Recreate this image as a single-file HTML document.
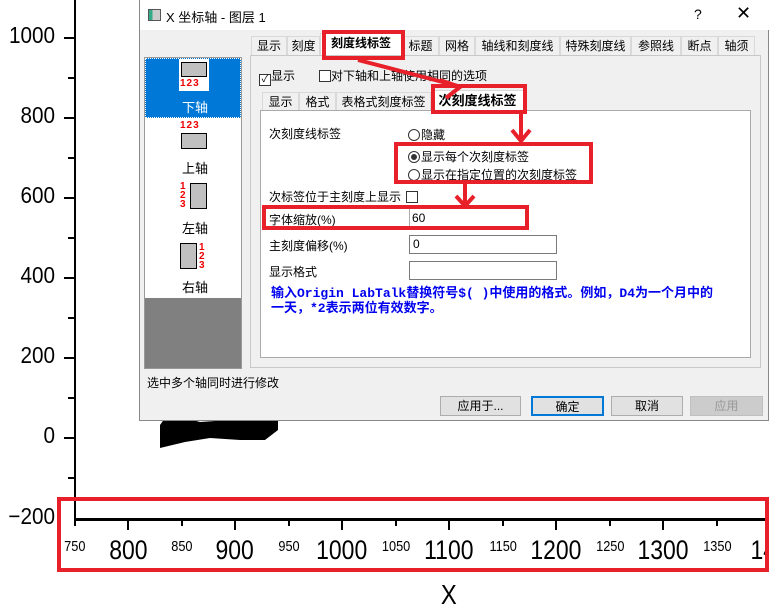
<!DOCTYPE html>
<html><head><meta charset="utf-8"><style>
*{margin:0;padding:0;box-sizing:border-box}
body{width:769px;height:610px;background:#fff;position:relative;overflow:hidden;font-family:"Liberation Sans","Noto Sans CJK SC",sans-serif;font-size:12px;color:#000}
.a{position:absolute}
.yl{font-size:23px;text-align:right;width:60px;left:-5px;transform:scaleX(0.9);transform-origin:right}
.red{border:4px solid #e8202a;position:absolute}
.tab{position:absolute;top:36px;height:20px;line-height:19px;border:1px solid #d9d9d9;border-bottom:none;background:#f0f0f0;text-align:center;font-size:12px}
.btn{position:absolute;top:396px;height:20px;border:1px solid #adadad;background:#e1e1e1;text-align:center;line-height:18px;font-size:12px}
.box{position:absolute;border:1px solid #7a7a7a;background:#fff;height:19px;padding-left:3px;line-height:17px}
.rad{display:inline-block;width:12px;height:12px;border:1px solid #333;border-radius:50%;vertical-align:-2px;margin-right:1px;background:#fff;position:relative}
.chk{display:inline-block;width:12px;height:12px;border:1px solid #333;vertical-align:-2px;background:#fff}
</style></head><body>
<div class="a" style="left:74px;top:0;width:2px;height:520px;background:#000"></div>
<div class="a" style="left:74px;top:518px;width:695px;height:3px;background:#000"></div>
<div class="a yl" style="top:22px">1000</div>
<div class="a yl" style="top:102px">800</div>
<div class="a yl" style="top:182px">600</div>
<div class="a yl" style="top:262px">400</div>
<div class="a yl" style="top:342px">200</div>
<div class="a yl" style="top:422px">0</div>
<div class="a yl" style="top:503px">−200</div>
<div class="a" style="left:64px;top:37px;width:10px;height:2px;background:#000"></div>
<div class="a" style="left:64px;top:117px;width:10px;height:2px;background:#000"></div>
<div class="a" style="left:64px;top:197px;width:10px;height:2px;background:#000"></div>
<div class="a" style="left:64px;top:277px;width:10px;height:2px;background:#000"></div>
<div class="a" style="left:64px;top:357px;width:10px;height:2px;background:#000"></div>
<div class="a" style="left:64px;top:437px;width:10px;height:2px;background:#000"></div>
<div class="a" style="left:68px;top:77px;width:6px;height:2px;background:#000"></div>
<div class="a" style="left:68px;top:157px;width:6px;height:2px;background:#000"></div>
<div class="a" style="left:68px;top:237px;width:6px;height:2px;background:#000"></div>
<div class="a" style="left:68px;top:317px;width:6px;height:2px;background:#000"></div>
<div class="a" style="left:68px;top:397px;width:6px;height:2px;background:#000"></div>
<div class="a" style="left:68px;top:477px;width:6px;height:2px;background:#000"></div>
<svg class="a" style="left:0;top:0" width="769" height="610">
<g stroke="#000" stroke-width="2">
<line x1="75" y1="520" x2="75" y2="526"/><line x1="128" y1="520" x2="128" y2="530"/>
<line x1="182" y1="520" x2="182" y2="526"/><line x1="235" y1="520" x2="235" y2="530"/>
<line x1="289" y1="520" x2="289" y2="526"/><line x1="342" y1="520" x2="342" y2="530"/>
<line x1="396" y1="520" x2="396" y2="526"/><line x1="449" y1="520" x2="449" y2="530"/>
<line x1="503" y1="520" x2="503" y2="526"/><line x1="556" y1="520" x2="556" y2="530"/>
<line x1="610" y1="520" x2="610" y2="526"/><line x1="663" y1="520" x2="663" y2="530"/>
<line x1="717" y1="520" x2="717" y2="526"/>
</g>
<g font-family="Liberation Sans,sans-serif" text-anchor="middle" transform="scale(0.85,1)">
<text x="88" y="551" font-size="15">750</text><text x="151" y="559" font-size="27">800</text>
<text x="214" y="551" font-size="15">850</text><text x="276" y="559" font-size="27">900</text>
<text x="340" y="551" font-size="15">950</text><text x="402" y="559" font-size="27">1000</text>
<text x="466" y="551" font-size="15">1050</text><text x="528" y="559" font-size="27">1100</text>
<text x="592" y="551" font-size="15">1150</text><text x="654" y="559" font-size="27">1200</text>
<text x="718" y="551" font-size="15">1250</text><text x="780" y="559" font-size="27">1300</text>
<text x="844" y="551" font-size="15">1350</text><text x="898" y="559" font-size="27">14</text>
<text x="528" y="604" font-size="28">X</text>
</g>
<path d="M160 425 L165 418 L185 418 L200 422 L230 420 L260 418 L278 418 L278 430 L265 440 L240 440 L210 438 L185 442 L160 448Z" fill="#000"/>
</svg>
<div class="red" style="left:57px;top:497px;width:712px;height:75px"></div>

<div class="a" style="left:139px;top:0;width:630px;height:421px;background:#f0f0f0;border:1px solid #888"></div>
<div class="a" style="left:140px;top:0;width:629px;height:30px;background:#fff"></div>
<div class="a" style="left:148px;top:9px;width:13px;height:12px;border:1px solid #555;background:linear-gradient(90deg,#3a8 0 30%,#ccc 30%)"></div>
<div class="a" style="left:166px;top:7px;font-size:13px">X 坐标轴 - 图层 1</div>
<div class="a" style="left:694px;top:6px;font-size:14px">?</div>
<div class="a" style="left:736px;top:3px;font-size:18px">✕</div>

<div class="tab" style="left:251px;width:36px">显示</div>
<div class="tab" style="left:287px;width:33px">刻度</div>
<div class="tab" style="left:320px;width:82px;font-weight:bold;background:#fff;top:33px;height:23px">刻度线标签</div>
<div class="tab" style="left:402px;width:37px">标题</div>
<div class="tab" style="left:439px;width:36px">网格</div>
<div class="tab" style="left:475px;width:85px">轴线和刻度线</div>
<div class="tab" style="left:560px;width:71px">特殊刻度线</div>
<div class="tab" style="left:631px;width:50px">参照线</div>
<div class="tab" style="left:681px;width:37px">断点</div>
<div class="tab" style="left:718px;width:37px">轴须</div>
<div class="a" style="left:250px;top:55px;width:511px;height:313px;border:1px solid #c8c8c8;background:#f0f0f0"></div>

<div class="a" style="left:144px;top:57px;width:98px;height:312px;border:1px solid #999;background:#fff"></div>
<div class="a" style="left:145px;top:58px;width:96px;height:60px;background:#0078d7;border:1px dotted #fff"></div>
<div class="a" style="left:179px;top:59px;width:30px;height:32px;background:#fff"></div>
<div class="a" style="left:181px;top:62px;width:26px;height:15px;background:#c0c0c0;border:1px solid #000"></div>
<div class="a" style="left:180px;top:78px;font-size:10px;color:#e00;font-weight:bold;letter-spacing:1px">123</div>
<div class="a" style="left:182px;top:97px;color:#fff;font-size:13px">下轴</div>
<div class="a" style="left:180px;top:120px;font-size:10px;color:#e00;font-weight:bold;letter-spacing:1px">123</div>
<div class="a" style="left:181px;top:133px;width:26px;height:16px;background:#c0c0c0;border:1px solid #000"></div>
<div class="a" style="left:182px;top:158px;font-size:13px">上轴</div>
<div class="a" style="left:180px;top:182px;font-size:10px;color:#e00;font-weight:bold;line-height:9px">1<br>2<br>3</div>
<div class="a" style="left:190px;top:183px;width:17px;height:26px;background:#c0c0c0;border:1px solid #000"></div>
<div class="a" style="left:182px;top:218px;font-size:13px">左轴</div>
<div class="a" style="left:180px;top:243px;width:17px;height:26px;background:#c0c0c0;border:1px solid #000"></div>
<div class="a" style="left:199px;top:243px;font-size:10px;color:#e00;font-weight:bold;line-height:9px">1<br>2<br>3</div>
<div class="a" style="left:182px;top:277px;font-size:13px">右轴</div>
<div class="a" style="left:145px;top:298px;width:96px;height:70px;background:#808080"></div>

<div class="a" style="left:259px;top:67px"><span class="chk" style="text-align:center;font-size:10px;line-height:10px">✓</span>显示</div>
<div class="a" style="left:319px;top:67px"><span class="chk"></span>对下轴和上轴使用相同的选项</div>

<div class="tab" style="left:262px;top:92px;width:37px;height:19px">显示</div>
<div class="tab" style="left:299px;top:92px;width:37px;height:19px">格式</div>
<div class="tab" style="left:336px;top:92px;width:95px;height:19px">表格式刻度标签</div>
<div class="tab" style="left:431px;top:90px;width:93px;height:21px;background:#fff;font-weight:bold;font-size:13px">次刻度线标签</div>
<div class="a" style="left:260px;top:110px;width:491px;height:248px;border:1px solid #aaa;background:#fff"></div>

<div class="a" style="left:269px;top:125px">次刻度线标签</div>
<div class="a" style="left:408px;top:126px"><span class="rad"></span>隐藏</div>
<div class="a" style="left:408px;top:148px"><span class="rad"><span class="a" style="left:2px;top:2px;width:6px;height:6px;border-radius:50%;background:#333"></span></span>显示每个次刻度标签</div>
<div class="a" style="left:408px;top:166px"><span class="rad"></span>显示在指定位置的次刻度标签</div>
<div class="a" style="left:269px;top:188px">次标签位于主刻度上显示 <span class="chk" style="margin-left:2px"></span></div>
<div class="a" style="left:269px;top:211px">字体缩放(%)</div>
<div class="a" style="left:409px;top:208px;width:1px;height:20px;background:#aaa"></div>
<div class="a" style="left:412px;top:211px">60</div>
<div class="a" style="left:269px;top:237px">主刻度偏移(%)</div>
<div class="box" style="left:409px;top:235px;width:148px">0</div>
<div class="a" style="left:269px;top:263px">显示格式</div>
<div class="box" style="left:409px;top:261px;width:148px"></div>
<div class="a" style="left:271px;top:286px;color:#0000ee;font-weight:bold;font-family:'Liberation Mono','Noto Sans CJK SC',monospace;font-size:13px;line-height:15px;width:452px">输入Origin LabTalk替换符号$( )中使用的格式。例如，D4为一个月中的一天，*2表示两位有效数字。</div>

<div class="a" style="left:147px;top:374px">选中多个轴同时进行修改</div>
<div class="btn" style="left:440px;width:81px">应用于...</div>
<div class="btn" style="left:531px;width:73px;border:2px solid #0078d7">确定</div>
<div class="btn" style="left:611px;width:72px">取消</div>
<div class="btn" style="left:690px;width:73px;color:#999;background:#ccc;border-color:#bfbfbf">应用</div>

<div class="red" style="left:322px;top:30px;width:83px;height:30px"></div>
<div class="red" style="left:431px;top:84px;width:96px;height:30px"></div>
<div class="red" style="left:394px;top:142px;width:199px;height:42px"></div>
<div class="red" style="left:262px;top:205px;width:267px;height:25px"></div>
<svg class="a" style="left:0;top:0" width="769" height="610" fill="none" stroke="#e8202a" stroke-width="4">
<line x1="358" y1="60" x2="458" y2="86"/><path d="M440 80 L460 87 L446 98"/>
<line x1="521" y1="114" x2="521" y2="140"/><path d="M512 130 L521 141 L530 130"/>
<line x1="465" y1="184" x2="465" y2="205"/><path d="M456 196 L465 206 L474 196"/>
</svg>
</body></html>
